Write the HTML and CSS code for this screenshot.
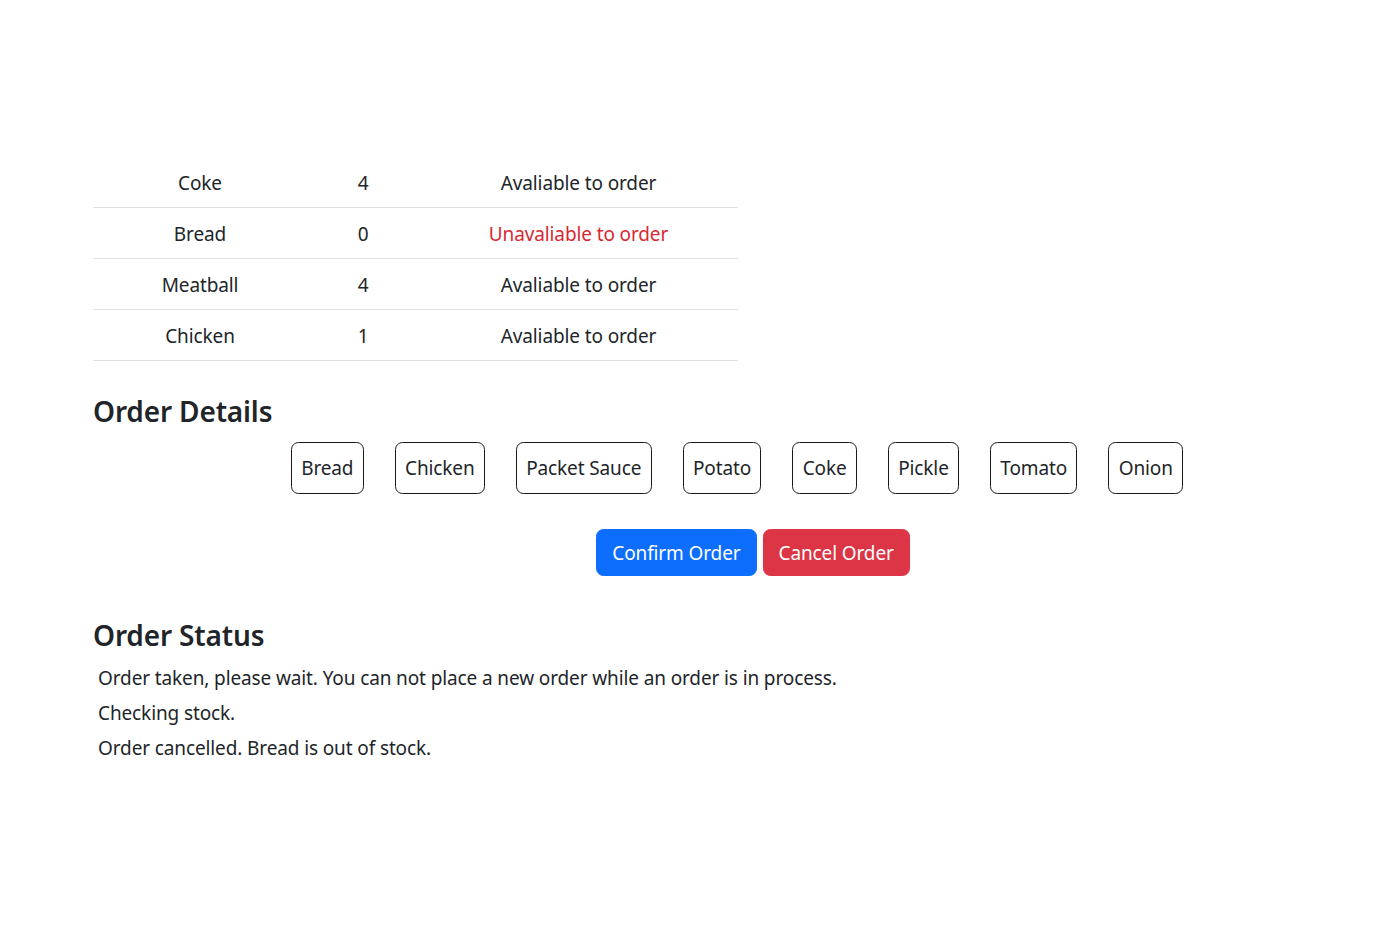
FILE: index.html
```html
<!DOCTYPE html>
<html lang="en">
<head>
<meta charset="utf-8">
<title>Order</title>
<link rel="stylesheet" href="styles.css">
</head>
<body>
<main class="page">
  <table class="stock">
    <colgroup><col class="c1"><col class="c2"><col class="c3"></colgroup>
    <tbody>
      <tr><td>Coke</td><td>4</td><td>Avaliable to order</td></tr>
      <tr><td>Bread</td><td>0</td><td class="danger">Unavaliable to order</td></tr>
      <tr><td>Meatball</td><td>4</td><td>Avaliable to order</td></tr>
      <tr><td>Chicken</td><td>1</td><td>Avaliable to order</td></tr>
    </tbody>
  </table>

  <h4 class="heading details-heading">Order Details</h4>
  <div class="ingredients">
    <button class="ing">Bread</button>
    <button class="ing">Chicken</button>
    <button class="ing">Packet Sauce</button>
    <button class="ing">Potato</button>
    <button class="ing">Coke</button>
    <button class="ing">Pickle</button>
    <button class="ing">Tomato</button>
    <button class="ing">Onion</button>
  </div>
  <div class="actions">
    <button class="btn btn-primary">Confirm Order</button>
    <button class="btn btn-danger">Cancel Order</button>
  </div>

  <h4 class="heading status-heading">Order Status</h4>
  <div class="status">
    <p>Order taken, please wait. You can not place a new order while an order is in process.</p>
    <p>Checking stock.</p>
    <p>Order cancelled. Bread is out of stock.</p>
  </div>
</main>
</body>
</html>
```
FILE: styles.css
```css
html, body {
  margin: 0;
  padding: 0;
  background: #fff;
}
body {
  font-family: "Segoe UI", "Noto Sans", "Open Sans", sans-serif;
  font-size: 19px;
  letter-spacing: -0.12px;
  line-height: 30px;
  color: #212529;
}
.page {
  padding: 157px 0 0 93px;
}
.stock {
  border-collapse: collapse;
  width: 645px;
  table-layout: fixed;
}
.stock .c1 { width: 214px; }
.stock .c2 { width: 112px; }
.stock .c3 { width: 319px; }
.stock td {
  text-align: center;
  padding: 11px 0 9px;
  height: 30px;
  border-bottom: 1px solid #dee2e6;
}
.stock td.danger { color: #d92832; }

.heading {
  margin: 0;
  font-size: 28px;
  letter-spacing: -0.15px;
  line-height: 36px;
  font-weight: 600;
  color: #212529;
}
.details-heading { margin-top: 32px; }
.status-heading { margin-top: 41px; }

.ingredients {
  display: flex;
  justify-content: center;
  gap: 31px;
  margin-top: 13px;
  padding-left: 6px;
}
button {
  font-family: inherit;
  font-size: 19px;
  letter-spacing: -0.12px;
  line-height: 30px;
  margin: 0;
  cursor: pointer;
}
.ing {
  background: #fff;
  color: #212529;
  border: 1px solid #1a1a1a;
  border-radius: 7.5px;
  padding: 10px 9.3px;
}
.actions {
  display: flex;
  justify-content: center;
  gap: 6px;
  margin-top: 35px;
  padding-left: 38px;
}
.btn {
  color: #fff;
  border: 1px solid transparent;
  border-radius: 7.5px;
  padding: 7.5px 15px;
}
.btn-primary { background: #0d6efd; border-color: #0d6efd; }
.btn-danger { background: #dc3545; border-color: #dc3545; }

.status {
  margin-top: 10px;
  padding-left: 5px;
  display: flex;
  flex-direction: column;
  gap: 5px;
}
.status p { margin: 0; }
```
